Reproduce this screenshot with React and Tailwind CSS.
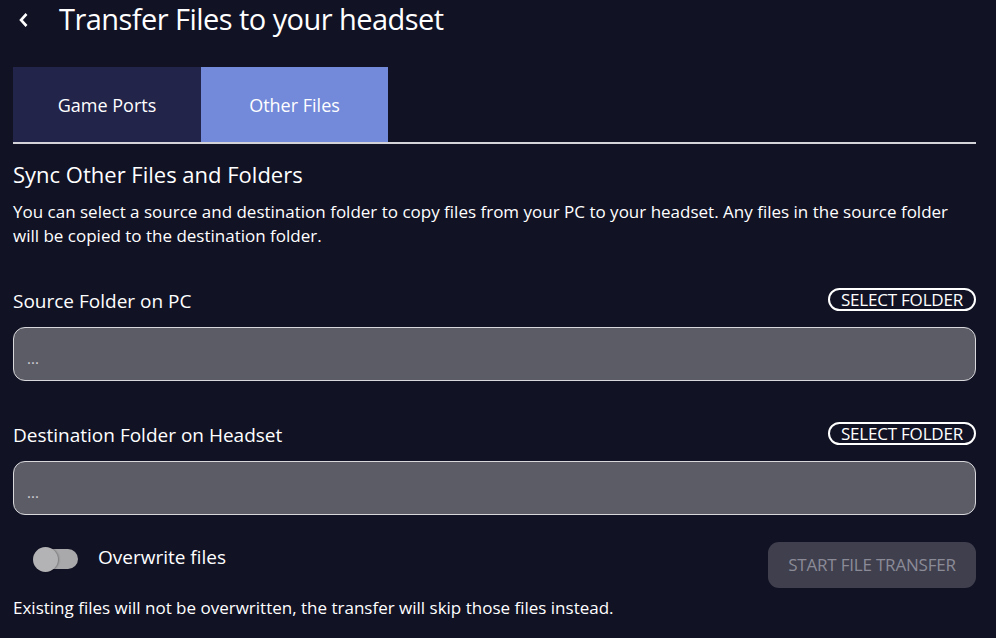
import { useState } from "react";

function FolderField({ label, top }) {
  return (
    <div className={top}>
      <div className="flex items-start justify-between">
        <span className="text-[19px] leading-6 mt-[1px]">{label}</span>
        <button className="rounded-full border-2 border-white px-[11px] h-[23px] flex items-center text-[17px] leading-none uppercase tracking-[-0.2px]">
          Select Folder
        </button>
      </div>
      <div className="mt-[14px] h-[54px] rounded-[12px] border border-[#d8d8dc] bg-[#5c5c67] px-[13px] flex items-center pt-[8px] text-[15px] text-[#d0d0d6]">
        ...
      </div>
    </div>
  );
}

export default function App() {
  const [overwrite, setOverwrite] = useState(false);

  return (
    <div
      className="w-[996px] h-[638px] overflow-hidden bg-[#111224] text-white"
      style={{ fontFamily: '"Segoe UI", "Open Sans", "Noto Sans", sans-serif' }}
    >
      {/* header */}
      <div className="flex items-center h-[38px] pl-[18px]">
        <svg width="12" height="16" viewBox="0 0 12 16" className="mt-[1px]">
          <path d="M8.5 2 L3 8 L8.5 14" fill="none" stroke="white" strokeWidth="2.6" />
        </svg>
        <h1 className="ml-[29px] -mt-[1px] text-[29px] leading-none tracking-[-0.55px]">Transfer Files to your headset</h1>
      </div>

      <div className="px-[13px] pr-[20px]">
        {/* tabs */}
        <div className="mt-[29px] flex border-b-2 border-[#d4d4d8]">
          <button className="w-[188px] h-[75px] bg-[#23244a] text-[18px] pt-[1px]">Game Ports</button>
          <button className="w-[187px] h-[75px] bg-[#7389d9] text-[18px] pt-[1px]">Other Files</button>
        </div>

        <h2 className="mt-[16px] text-[22px] leading-7">Sync Other Files and Folders</h2>
        <p className="mt-[12px] text-[17px] leading-6 pr-[10px]">
          You can select a source and destination folder to copy files from your PC to your headset. Any files in the source folder will be copied to the destination folder.
        </p>

        <FolderField label="Source Folder on PC" top="mt-[40px]" />
        <FolderField label="Destination Folder on Headset" top="mt-[41px]" />

        {/* options */}
        <div className="mt-[27px] flex items-start justify-between">
          <div className="flex items-center mt-[4px]">
            <button
              onClick={() => setOverwrite(!overwrite)}
              className="relative ml-[20px] w-[45px] h-[26px] flex items-center"
            >
              <span className="absolute left-[7px] right-0 h-[20px] rounded-full bg-[#a9a9ab]" />
              <span className="absolute left-0 w-[25px] h-[25px] rounded-full bg-[#b3b3b5] shadow-[1px_0_2px_rgba(0,0,0,0.3)]" />
            </button>
            <span className="ml-[20px] text-[19px] -mt-[4px]">Overwrite files</span>
          </div>
          <button className="w-[208px] h-[46px] rounded-[11px] bg-[#3f3f4e] text-[#8b8b97] text-[17px] uppercase tracking-[-0.2px]">
            Start File Transfer
          </button>
        </div>

        <p className="mt-[8px] text-[17px] leading-6">
          Existing files will not be overwritten, the transfer will skip those files instead.
        </p>
      </div>
    </div>
  );
}
